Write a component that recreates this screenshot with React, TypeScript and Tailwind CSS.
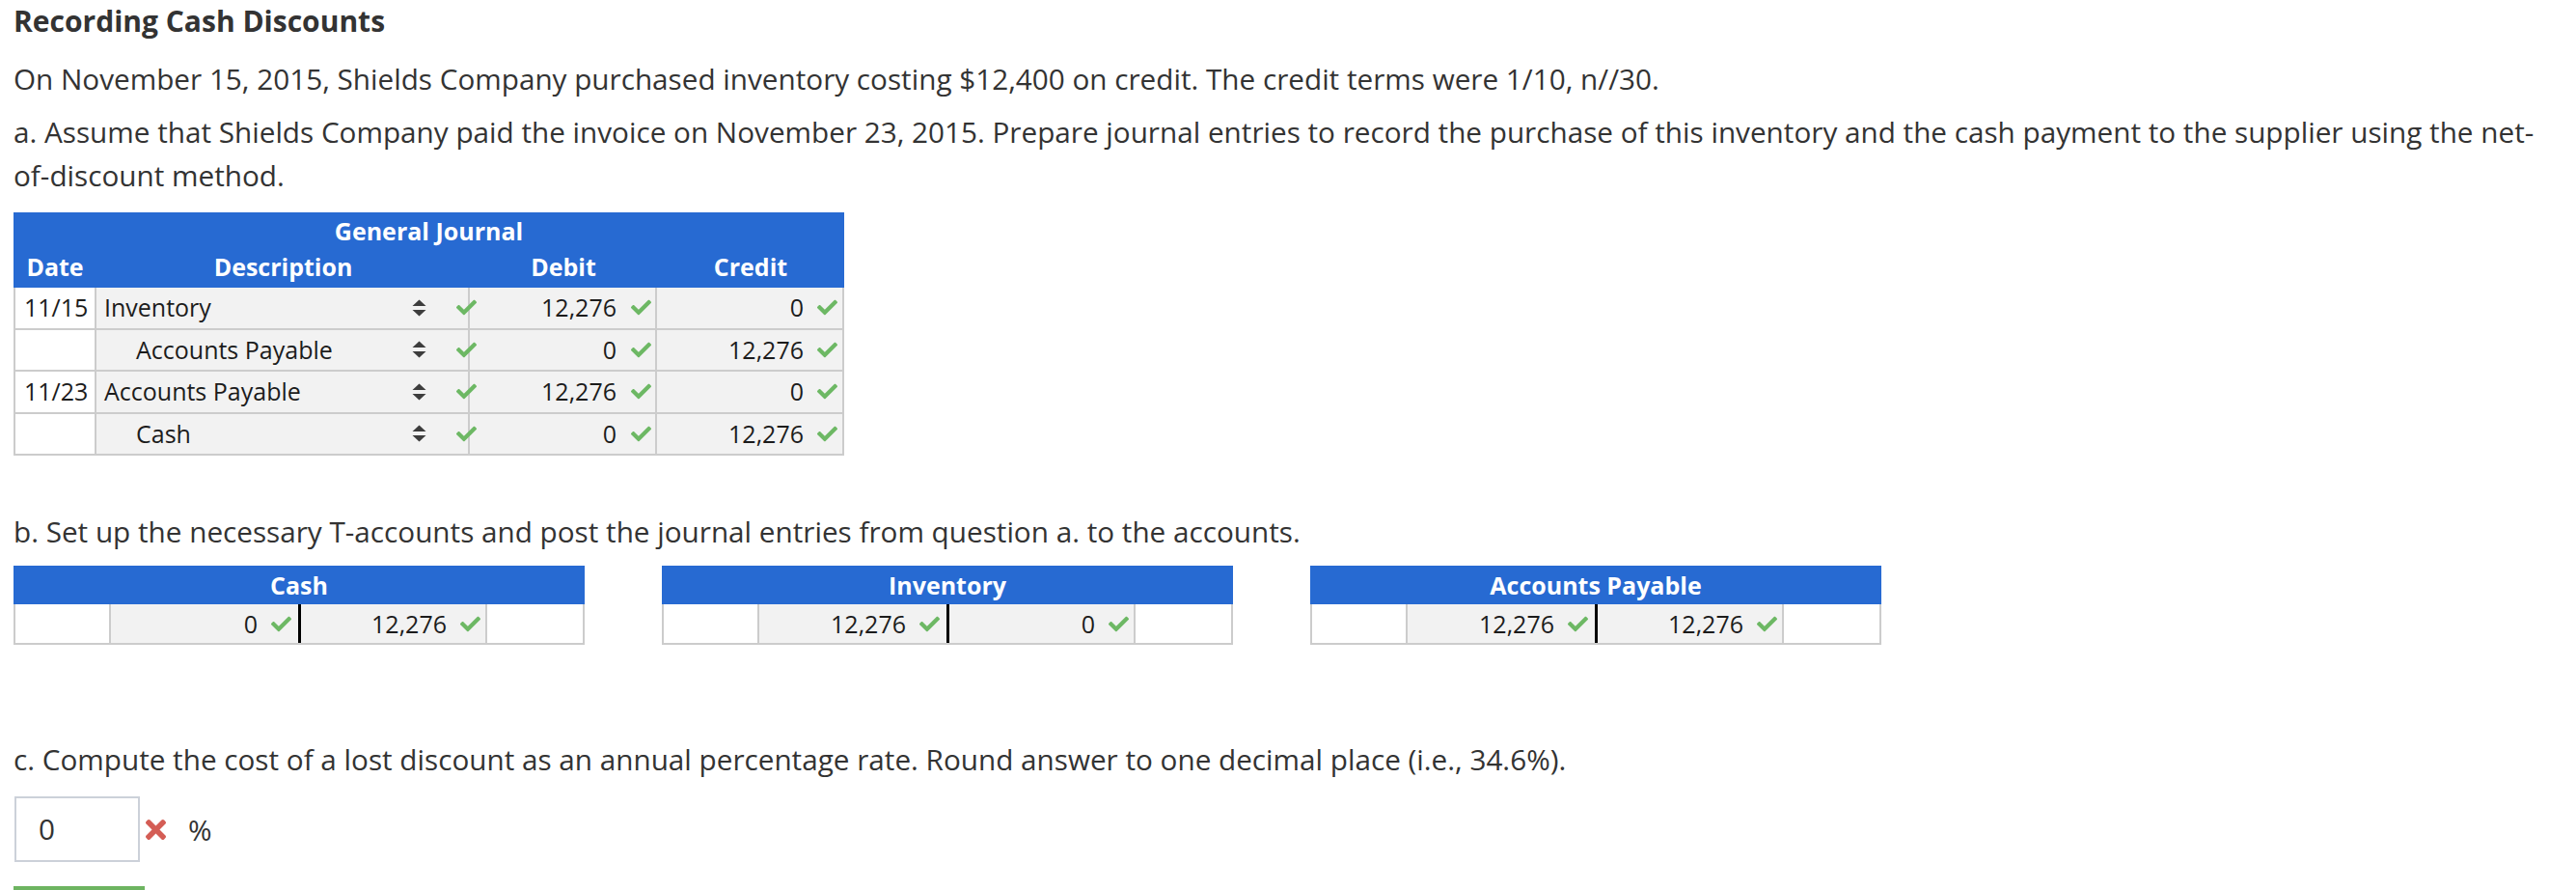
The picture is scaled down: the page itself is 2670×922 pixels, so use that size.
import React from "react";

const BLUE = "bg-[#276ad2]";

const Check = () => (
  <svg width="21" height="21" viewBox="0 0 512 512" className="relative z-10 shrink-0">
    <path
      fill="#6db864"
      d="M173.898 439.404l-166.4-166.4c-9.997-9.997-9.997-26.206 0-36.204l36.203-36.204c9.997-9.998 26.207-9.998 36.204 0L192 312.69 432.095 72.596c9.997-9.997 26.207-9.997 36.204 0l36.203 36.204c9.997 9.997 9.997 26.206 0 36.204l-294.4 294.401c-9.998 9.997-26.207 9.997-36.204-.001z"
    />
  </svg>
);

const Cross = () => (
  <svg width="21" height="21" viewBox="0 80 352 352" className="shrink-0">
    <path
      fill="#d45d55"
      d="M242.72 256l100.07-100.07c12.28-12.28 12.28-32.19 0-44.48l-22.24-22.24c-12.28-12.28-32.19-12.28-44.48 0L176 189.28 75.930 89.21c-12.28-12.28-32.19-12.28-44.48 0L9.21 111.45c-12.28 12.28-12.28 32.19 0 44.48L109.28 256 9.21 356.07c-12.28 12.28-12.28 32.19 0 44.48l22.24 22.24c12.28 12.28 32.2 12.28 44.48 0L176 322.72l100.07 100.07c12.28 12.28 32.2 12.28 44.48 0l22.24-22.24c12.28-12.28 12.28-32.19 0-44.48L242.72 256z"
    />
  </svg>
);

const Arrows = () => (
  <svg width="15" height="18" viewBox="0 0 15 18" className="shrink-0">
    <path fill="#3d3d3d" d="M7.5 0.5 L14.5 7 L0.5 7 Z" />
    <path fill="#3d3d3d" d="M0.5 11 L14.5 11 L7.5 17.5 Z" />
  </svg>
);

type Row = { date: string; account: string; indent: boolean; debit: string; credit: string };

const rows: Row[] = [
  { date: "11/15", account: "Inventory", indent: false, debit: "12,276", credit: "0" },
  { date: "", account: "Accounts Payable", indent: true, debit: "0", credit: "12,276" },
  { date: "11/23", account: "Accounts Payable", indent: false, debit: "12,276", credit: "0" },
  { date: "", account: "Cash", indent: true, debit: "0", credit: "12,276" },
];

const JournalRow = ({ r }: { r: Row }) => (
  <div className="grid h-[43.5px] grid-cols-[86px_387px_194px_194px] border-b-2 border-[#cccccc] text-[25px] leading-[41px] text-[#1c1c1c]">
    <div className="border-l-2 border-r-2 border-[#cccccc] bg-white pl-[9px]">{r.date}</div>
    <div className="flex items-center border-r-2 border-[#cccccc] bg-[#f2f2f2]">
      <span className={r.indent ? "flex-1 pl-[41px]" : "flex-1 pl-[8px]"}>{r.account}</span>
      <Arrows />
      <span className="ml-[31px] mr-[-9px] flex">
        <Check />
      </span>
    </div>
    <div className="flex items-center justify-end gap-[15px] border-r-2 border-[#cccccc] bg-[#f2f2f2] pr-[4px]">
      <span>{r.debit}</span>
      <Check />
    </div>
    <div className="flex items-center justify-end gap-[14px] border-r-2 border-[#cccccc] bg-[#f2f2f2] pr-[5px]">
      <span>{r.credit}</span>
      <Check />
    </div>
  </div>
);

const TAccount = ({ title, left, right }: { title: string; left: string; right: string }) => (
  <div className="w-[592px]">
    <div className={`${BLUE} h-[40px] text-center text-[25px] font-bold leading-[40px] text-white`}>{title}</div>
    <div className="grid h-[42px] grid-cols-[101px_194px_196px_101px] border-b-2 border-[#cccccc] text-[25px] leading-[40px] text-[#1c1c1c]">
      <div className="border-l-2 border-r-2 border-[#cccccc] bg-white" />
      <div className="flex items-center justify-end gap-[14px] bg-[#f2f2f2] pr-[7px]">
        <span>{left}</span>
        <Check />
      </div>
      <div className="flex items-center justify-end gap-[14px] border-l-[3px] border-r-2 border-l-black border-r-[#cccccc] bg-[#f2f2f2] pr-[5px]">
        <span>{right}</span>
        <Check />
      </div>
      <div className="border-r-2 border-[#cccccc] bg-white" />
    </div>
  </div>
);

export default function App() {
  return (
    <div
      className="min-h-[922px] bg-white pl-[14px] pr-[14px] pt-[3px] text-[#333333]"
      style={{ fontFamily: '"Open Sans", "Noto Sans", sans-serif' }}
    >
      <h1 className="text-[30px] font-bold leading-[38px]">Recording Cash Discounts</h1>
      <p className="mt-[18px] text-[29.7px] leading-[45px]">
        On November 15, 2015, Shields Company purchased inventory costing $12,400 on credit. The credit terms were 1/10, n//30.
      </p>
      <p className="mt-[10px] text-[29.7px] leading-[45px]">
        a. Assume that Shields Company paid the invoice on November 23, 2015. Prepare journal entries to record the purchase of
        this inventory and the cash payment to the supplier using the net-of-discount method.
      </p>

      <div className="mt-[16px] w-[861px]">
        <div className={`${BLUE} text-[25px] font-bold text-white`}>
          <div className="h-[38px] text-center leading-[38px]">General Journal</div>
          <div className="grid h-[40px] grid-cols-[86px_387px_194px_194px] leading-[36px]">
            <div className="text-center">Date</div>
            <div className="text-center">Description</div>
            <div className="text-center">Debit</div>
            <div className="text-center">Credit</div>
          </div>
        </div>
        {rows.map((r, i) => (
          <JournalRow key={i} r={r} />
        ))}
      </div>

      <p className="mt-[56px] text-[29.7px] leading-[45px]">
        b. Set up the necessary T-accounts and post the journal entries from question a. to the accounts.
      </p>
      <div className="mt-[13px] flex gap-[80px]">
        <TAccount title="Cash" left="0" right="12,276" />
        <TAccount title="Inventory" left="12,276" right="0" />
        <TAccount title="Accounts Payable" left="12,276" right="12,276" />
      </div>

      <p className="mt-[96px] text-[29.7px] leading-[45px]">
        c. Compute the cost of a lost discount as an annual percentage rate. Round answer to one decimal place (i.e., 34.6%).
      </p>
      <div className="mt-[16px] flex items-center">
        <div className="ml-[1px] h-[68px] w-[130px] border-2 border-[#ccd1d9] pl-[23px] text-[29.7px] leading-[64px]">0</div>
        <span className="ml-[6px] flex">
          <Cross />
        </span>
        <span className="ml-[23px] text-[29.7px] leading-[45px]">%</span>
      </div>
      <div className="mt-[25px] h-[20px] w-[136px] bg-[#6db461]" />
    </div>
  );
}
